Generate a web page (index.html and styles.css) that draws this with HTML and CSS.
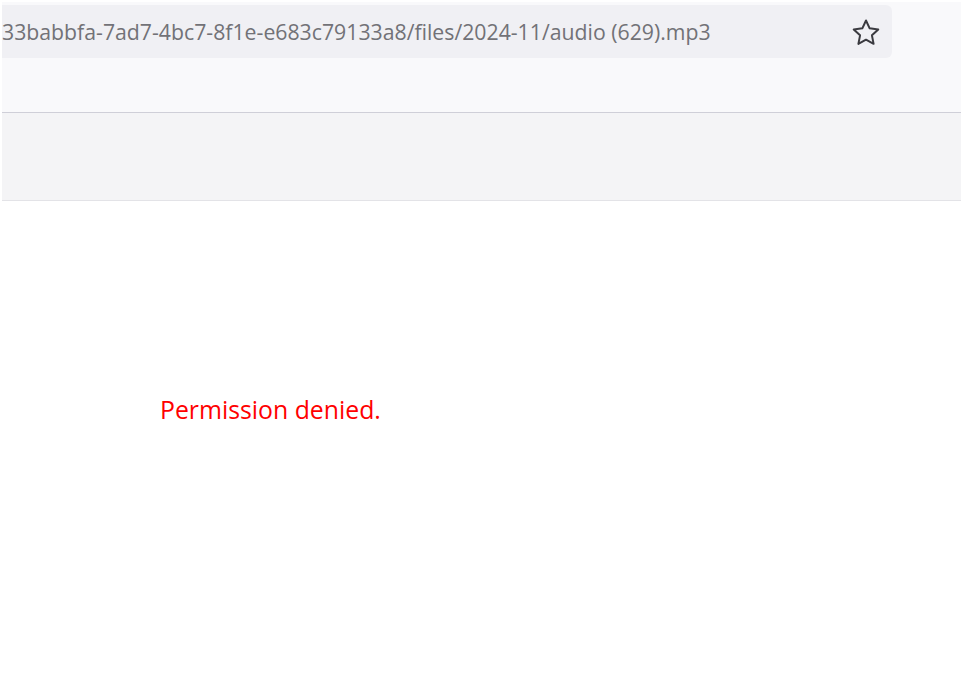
FILE: index.html
```html
<!DOCTYPE html>
<html lang="en">
<head>
<meta charset="utf-8">
<title>audio (629).mp3</title>
<link rel="stylesheet" href="styles.css">
</head>
<body>
<div class="frame">
  <header class="toolbar">
    <div class="urlbar">
      <span class="url">33babbfa-7ad7-4bc7-8f1e-e683c79133a8/files/2024-11/audio (629).mp3</span>
      <svg class="star" viewBox="0 0 24 24" width="32" height="32" aria-hidden="true">
        <path d="M12 2.6l2.75 5.9 6.45.8-4.75 4.45 1.25 6.4L12 17l-5.7 3.15 1.25-6.4L2.8 9.3l6.45-.8z" fill="none" stroke="#3b3b40" stroke-width="1.5" stroke-linejoin="round"/>
      </svg>
    </div>
  </header>
  <div class="infobar"></div>
  <main class="content">
    <p class="error">Permission denied.</p>
  </main>
</div>
</body>
</html>
```

FILE: styles.css
```css
html, body {
  margin: 0;
  padding: 0;
  background: #ffffff;
}
.frame {
  padding: 2px 2px 0 2px;
  font-family: "Open Sans", "Noto Sans", sans-serif;
}
.toolbar {
  background: #f9f9fb;
  border-bottom: 1px solid #cfcfd8;
  padding-top: 3px;
  box-sizing: border-box;
  height: 111px;
}
.urlbar {
  width: 890px;
  height: 53px;
  background: #f0f0f4;
  border-radius: 0 6px 6px 0;
  display: flex;
  align-items: center;
  justify-content: space-between;
  padding-right: 10px;
  box-sizing: border-box;
  overflow: hidden;
}
.url {
  font-size: 21.25px;
  color: #727277;
  white-space: nowrap;
}
.star {
  flex: none;
  margin-top: 3px;
}
.infobar {
  height: 87px;
  background: #f4f4f6;
  border-bottom: 1px solid #e3e3e7;
}
.content {
  padding: 193px 0 0 158px;
}
.error {
  margin: 0;
  color: #ff0000;
  font-size: 24.8px;
  line-height: 30px;
}
```
